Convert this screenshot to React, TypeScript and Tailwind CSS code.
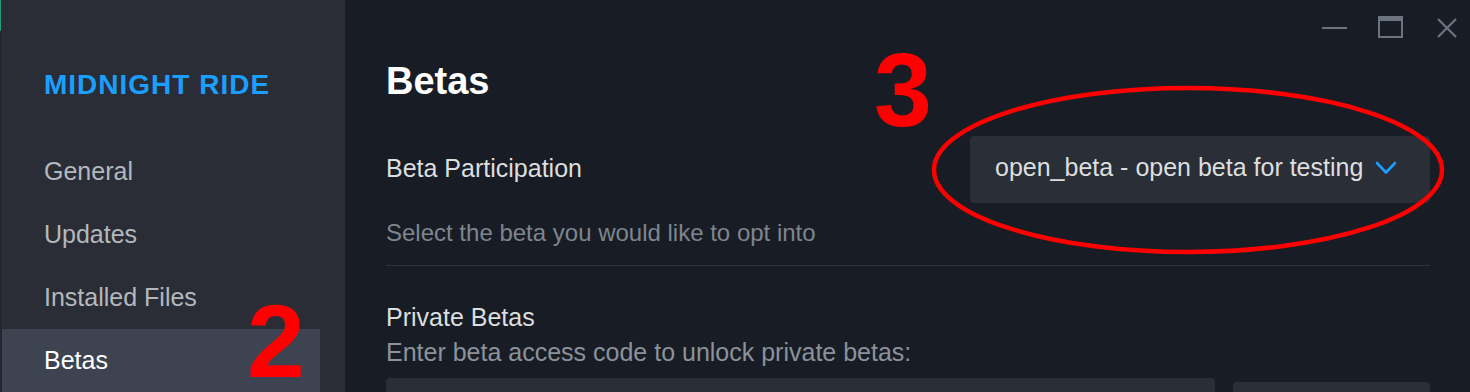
const navItems = ['General', 'Updates', 'Installed Files', 'Betas'];

function WindowControls() {
  return (
    <div className="flex h-[58px] shrink-0 items-start justify-end pr-[13px] pt-[16px]">
      {/* minimize */}
      <svg width="25" height="22" viewBox="0 0 25 22" className="mr-[31px]">
        <line x1="0" y1="12" x2="25" y2="12" stroke="#6b747f" strokeWidth="2" />
      </svg>
      {/* maximize */}
      <svg width="25" height="22" viewBox="0 0 25 22" className="mr-[34px]">
        <rect x="1" y="1" width="23" height="20" fill="none" stroke="#6b747f" strokeWidth="2" />
        <rect x="1" y="1" width="23" height="4" fill="#6b747f" />
      </svg>
      {/* close */}
      <svg width="20" height="20" viewBox="0 0 20 20" className="mt-[2px]">
        <path d="M1 1 L19 19 M19 1 L1 19" stroke="#6b747f" strokeWidth="2.2" />
      </svg>
    </div>
  );
}

export default function App() {
  return (
    <div className="relative flex h-[392px] w-full overflow-hidden bg-[#181d25] font-['Liberation_Sans',Arial,sans-serif]">
      {/* edge of the window behind */}
      <div className="flex w-[2px] flex-col bg-[#22262d]">
        <div className="h-[31px] w-[1px] bg-[#1f9f86]" />
      </div>

      {/* Sidebar */}
      <aside className="w-[343px] shrink-0 bg-[#2a2d35] pr-[25px]">
        <div className="pl-[42px] pt-[68px] text-[28px] font-bold leading-[34px] tracking-[1px] text-[#1a9fff]">
          MIDNIGHT RIDE
        </div>
        <nav className="mt-[38px] flex flex-col">
          {navItems.map((item) => (
            <div
              key={item}
              className={
                item === 'Betas'
                  ? 'flex h-[63px] shrink-0 items-center bg-[#3d4350] pl-[42px] text-[25px] text-white'
                  : 'flex h-[63px] shrink-0 items-center pl-[42px] text-[25px] text-[#b3b8bd]'
              }
            >
              {item}
            </div>
          ))}
        </nav>
      </aside>

      {/* Main */}
      <main className="flex min-w-0 flex-1 flex-col">
        <WindowControls />
        <div className="shrink-0 pl-[41px] pr-[40px]">
          <h1 className="text-[38px] font-bold leading-[46px] text-white">Betas</h1>

          <div className="mt-[32px] flex items-center justify-between">
            <div className="mb-[3px] text-[25px] leading-[30px] text-[#dcdedf]">Beta Participation</div>
            <div className="flex h-[67px] w-[460px] items-center justify-between rounded-[4px] bg-[#2a2e37] pb-[6px] pl-[25px] pr-[33px]">
              <span className="text-[25px] leading-[30px] text-[#dcdedf]">open_beta - open beta for testing</span>
              <svg width="22" height="14" viewBox="0 0 22 14" className="mt-[2px]">
                <polyline
                  points="2,2 11,11.5 20,2"
                  fill="none"
                  stroke="#1a9fff"
                  strokeWidth="2.6"
                  strokeLinecap="round"
                  strokeLinejoin="round"
                />
              </svg>
            </div>
          </div>

          <div className="mt-[15px] text-[24px] leading-[30px] text-[#7e858f]">
            Select the beta you would like to opt into
          </div>

          <div className="mt-[17px] h-[1px] bg-[#2c323b]" />

          <div className="mt-[36px] text-[25px] leading-[30px] text-[#dcdedf]">Private Betas</div>
          <div className="mt-[5px] text-[25px] leading-[30px] text-[#8b929b]">
            Enter beta access code to unlock private betas:
          </div>

          <div className="mt-[11px] flex gap-[18px]">
            <div className="h-[50px] flex-1 rounded-[4px] bg-[#2a2e37]" />
            <div className="mt-[4px] h-[46px] w-[197px] rounded-[4px] bg-[#2b2f38]" />
          </div>
        </div>
      </main>

      {/* Red annotations drawn over the screenshot */}
      <div className="pointer-events-none absolute left-[247px] top-[301px] text-[104px] font-bold leading-[80px] text-[#ff0000]">
        2
      </div>
      <div className="pointer-events-none absolute left-[874px] top-[50px] text-[104px] font-bold leading-[80px] text-[#ff0000]">
        3
      </div>
      <svg
        className="pointer-events-none absolute left-[931px] top-[85px]"
        width="514"
        height="170"
        viewBox="0 0 514 170"
      >
        <ellipse cx="257" cy="85" rx="254" ry="82" fill="none" stroke="#ff0000" strokeWidth="4.5" />
      </svg>
    </div>
  );
}
